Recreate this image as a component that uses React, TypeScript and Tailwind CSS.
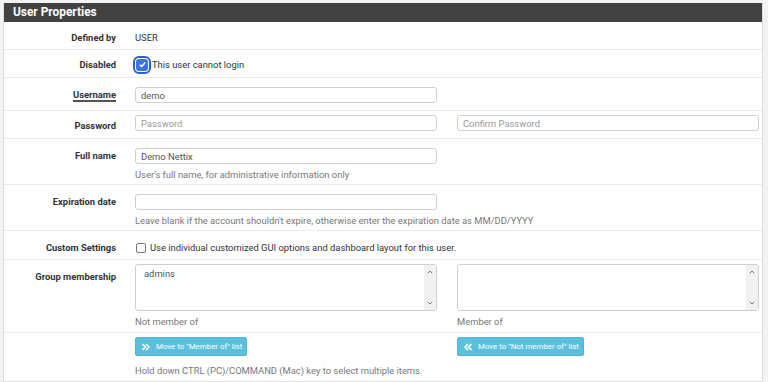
import { ChevronsLeft, ChevronsRight, ChevronUp, ChevronDown } from 'lucide-react'

function Input({ value, placeholder }: { value?: string; placeholder?: string }) {
  return (
    <div className="flex h-[16px] w-[302px] items-center rounded-[3px] border border-[#cfcfcf] bg-white px-[5px] text-[#555]">
      {value ? value : <span className="text-[#999]">{placeholder}</span>}
    </div>
  )
}

function Help({ text }: { text: string }) {
  return <div className="mt-[3px] text-[#777]">{text}</div>
}

function ListBox({ items }: { items: string[] }) {
  return (
    <div className="flex h-[47px] w-[302px] rounded-[3px] border border-[#cfcfcf] bg-white">
      <div className="flex-1 px-[8px] pt-[1px] text-[#555]">
        {items.map(i => (
          <div key={i}>{i}</div>
        ))}
      </div>
      <div className="flex w-[12px] flex-col items-center justify-between bg-[#f1f1f1] py-[3px] text-[#777]">
        <ChevronUp size={8} strokeWidth={3} />
        <ChevronDown size={8} strokeWidth={3} />
      </div>
    </div>
  )
}

export default function App() {
  return (
    <div
      className="h-[382px] w-[768px] overflow-hidden bg-[#f3f3f3] pl-[3px] pr-[5px] pt-[3px] text-[9.4px] leading-[15px]"
      style={{ fontFamily: 'Roboto, "Liberation Sans", sans-serif' }}
    >
      <div className="border-x border-b border-[#dcdcdc] bg-white">
        <div className="flex h-[19px] items-center bg-[#424242] pl-[9px] text-[11.9px] font-bold text-white">
          User Properties
        </div>

        {/* Defined by */}
        <div className="flex h-[27px] gap-[19px]">
          <div className="w-[112px] shrink-0 pt-[8px] text-right font-bold text-[#333]">Defined by</div>
          <div className="pt-[8px] text-[#333]">USER</div>
        </div>

        {/* Disabled */}
        <div className="flex h-[28px] gap-[19px] border-t border-[#ececec]">
          <div className="w-[112px] shrink-0 pt-[7px] text-right font-bold text-[#333]">Disabled</div>
          <div className="flex h-[22px] items-center gap-[3px] pt-[7px] text-[#333]">
            <span className="ml-[1px] flex h-[12px] w-[12px] items-center justify-center rounded-[3px] bg-[#3d74d8] outline-2 outline-offset-[1px] outline-[#2f5fcb]">
              <svg width="9" height="9" viewBox="0 0 10 10">
                <path d="M2 5.2 L4.2 7.3 L8 2.8" fill="none" stroke="white" strokeWidth="1.6" />
              </svg>
            </span>
            <span className="ml-[1px]">This user cannot login</span>
          </div>
        </div>

        {/* Username */}
        <div className="flex h-[33px] gap-[19px] border-t border-[#ececec]">
          <div className="w-[112px] shrink-0 pt-[9px] text-right font-bold text-[#333]">
            <span className="border-b-2 border-[#555]">Username</span>
          </div>
          <div className="pt-[9px]">
            <Input value="demo" />
          </div>
        </div>

        {/* Password */}
        <div className="flex h-[28px] gap-[19px] border-t border-[#ececec]">
          <div className="w-[112px] shrink-0 pt-[7px] text-right font-bold text-[#333]">Password</div>
          <div className="flex gap-[20px] pt-[4px]">
            <Input placeholder="Password" />
            <Input placeholder="Confirm Password" />
          </div>
        </div>

        {/* Full name */}
        <div className="flex h-[46px] gap-[19px] border-t border-[#ececec]">
          <div className="w-[112px] shrink-0 pt-[9px] text-right font-bold text-[#333]">Full name</div>
          <div className="pt-[9px]">
            <Input value="Demo Nettix" />
            <Help text="User's full name, for administrative information only" />
          </div>
        </div>

        {/* Expiration date */}
        <div className="flex h-[46px] gap-[19px] border-t border-[#ececec]">
          <div className="w-[112px] shrink-0 pt-[9px] text-right font-bold text-[#333]">Expiration date</div>
          <div className="pt-[9px]">
            <Input />
            <Help text="Leave blank if the account shouldn't expire, otherwise enter the expiration date as MM/DD/YYYY" />
          </div>
        </div>

        {/* Custom Settings */}
        <div className="flex h-[29px] gap-[19px] border-t border-[#ececec]">
          <div className="w-[112px] shrink-0 pt-[9px] text-right font-bold text-[#333]">Custom Settings</div>
          <div className="flex h-[24px] items-center gap-[4px] pt-[9px] text-[#333]">
            <span className="ml-[1px] h-[10px] w-[10px] rounded-[2px] border border-[#767676] bg-white" />
            <span>Use individual customized GUI options and dashboard layout for this user.</span>
          </div>
        </div>

        {/* Group membership */}
        <div className="flex h-[73px] gap-[19px] border-t border-[#ececec]">
          <div className="w-[112px] shrink-0 pt-[9px] text-right font-bold text-[#333]">Group membership</div>
          <div className="flex gap-[20px] pt-[4px]">
            <div>
              <ListBox items={['admins']} />
              <Help text="Not member of" />
            </div>
            <div>
              <ListBox items={[]} />
              <Help text="Member of" />
            </div>
          </div>
        </div>

        {/* Move buttons */}
        <div className="flex h-[49px] gap-[19px] border-t border-[#ececec]">
          <div className="w-[112px] shrink-0" />
          <div className="pt-[4px]">
            <div className="flex gap-[20px]">
              <div className="w-[302px]">
                <button className="flex h-[19px] items-center gap-[4px] rounded-[2px] border border-[#4fb6d6] bg-[#5bc0de] px-[4px] text-[7.9px] text-white">
                  <ChevronsRight size={12} strokeWidth={3.5} />
                  Move to "Member of" list
                </button>
              </div>
              <button className="flex h-[19px] items-center gap-[4px] rounded-[2px] border border-[#4fb6d6] bg-[#5bc0de] px-[4px] text-[7.9px] text-white">
                <ChevronsLeft size={12} strokeWidth={3.5} />
                Move to "Not member of" list
              </button>
            </div>
            <div className="mt-[7px] text-[#777]">Hold down CTRL (PC)/COMMAND (Mac) key to select multiple items.</div>
          </div>
        </div>
      </div>
    </div>
  )
}
